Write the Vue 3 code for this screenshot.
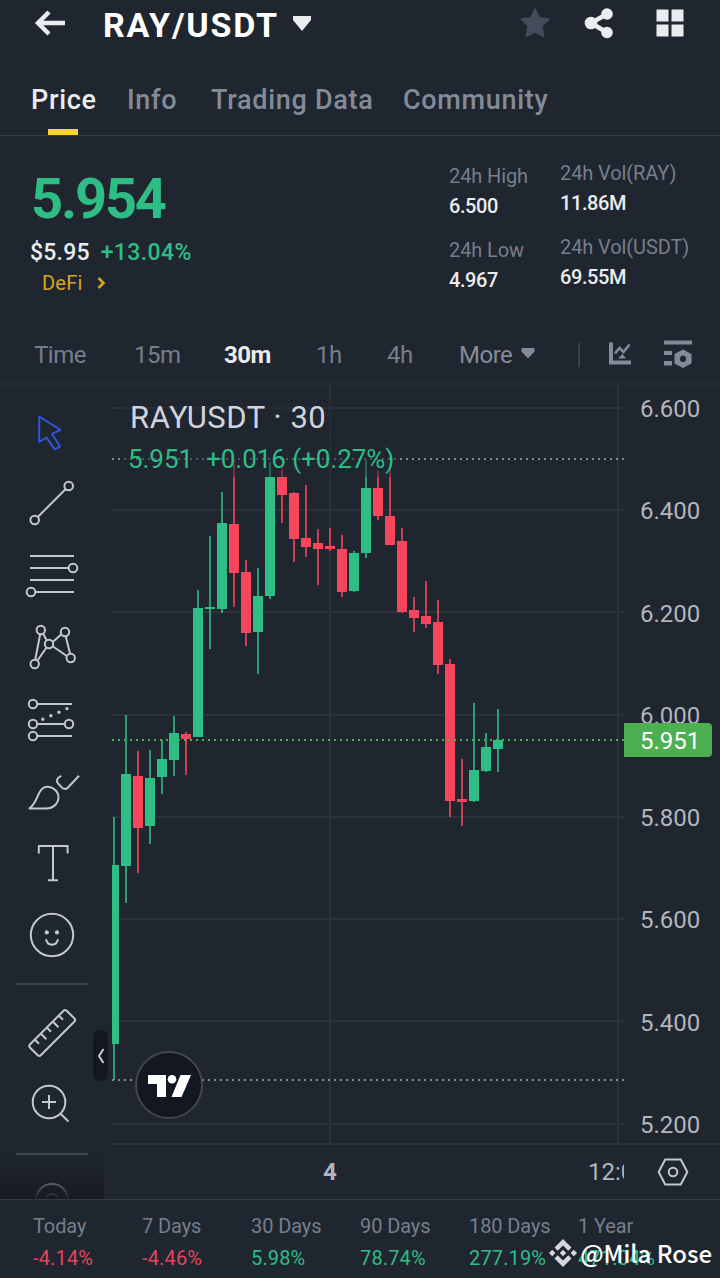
<script setup>
import { ref } from 'vue'

const tabs = ['Price', 'Info', 'Trading Data', 'Community']
const activeTab = ref('Price')

const intervals = ['Time', '15m', '30m', '1h', '4h']
const activeInterval = ref('30m')

const stats = [
  [
    { label: '24h High', value: '6.500' },
    { label: '24h Low', value: '4.967' },
  ],
  [
    { label: '24h Vol(RAY)', value: '11.86M' },
    { label: '24h Vol(USDT)', value: '69.55M' },
  ],
]

const prices = ['6.600', '6.400', '6.200', '6.000', '5.800', '5.600', '5.400', '5.200']
const gridRows = [23, 125, 227, 330, 432, 534, 636, 739]
const gridCols = [217, 505]

const CANDLE_STEP = 12

// [up, high, low, body top, body bottom] in plot pixels
const candles = [
  [1, 433, 696, 481, 660],
  [1, 331, 519, 390, 482],
  [0, 367, 489, 392, 444],
  [1, 366, 460, 394, 442],
  [1, 356, 410, 375, 393],
  [1, 332, 392, 349, 376],
  [0, 348, 391, 350, 355],
  [1, 206, 353, 224, 353],
  [1, 152, 265, 223, 225],
  [1, 108, 229, 139, 225],
  [0, 75, 223, 140, 189],
  [0, 176, 262, 188, 249],
  [1, 184, 290, 212, 248],
  [1, 78, 215, 93, 212],
  [0, 84, 139, 93, 111],
  [0, 108, 178, 109, 155],
  [0, 101, 173, 154, 163],
  [0, 145, 201, 159, 165],
  [0, 144, 167, 162, 165],
  [0, 151, 213, 165, 208],
  [1, 167, 208, 169, 207],
  [1, 76, 174, 104, 169],
  [0, 87, 136, 104, 132],
  [0, 85, 161, 132, 161],
  [0, 144, 229, 157, 228],
  [0, 213, 248, 226, 234],
  [0, 197, 244, 232, 240],
  [0, 216, 290, 238, 281],
  [0, 275, 433, 280, 417],
  [0, 375, 442, 415, 418],
  [1, 319, 418, 386, 417],
  [1, 349, 388, 363, 387],
  [1, 325, 388, 356, 365],
]

const performance = [
  { label: 'Today', value: '-4.14%' },
  { label: '7 Days', value: '-4.46%' },
  { label: '30 Days', value: '5.98%' },
  { label: '90 Days', value: '78.74%' },
  { label: '180 Days', value: '277.19%' },
  { label: '1 Year', value: '471.04%' },
]
</script>

<template>
  <div class="page">
    <header class="header">
      <svg width="32" height="28" viewBox="0 0 32 28">
        <path d="M15 3 L4 14 L15 25 M4 14 H31" fill="none" stroke="#eaecef" stroke-width="4.4" />
      </svg>
      <h1 class="pair">RAY/USDT</h1>
      <svg width="18" height="15" viewBox="0 0 18 15">
        <path d="M0 0 H18 V4 L9 15 L0 4 Z" fill="#eaecef" />
      </svg>
      <div class="actions">
        <svg width="32" height="32" viewBox="0 0 32 32">
          <path d="M16 2.5 L20 11 L29.5 12.2 L22.6 18.8 L24.5 29 L16 24.6 L7.5 29 L9.4 18.8 L2.5 12.2 L12 11 Z"
            fill="#434c5a" stroke="#434c5a" stroke-width="2" stroke-linejoin="round" />
        </svg>
        <svg class="share" width="30" height="32" viewBox="0 0 30 32">
          <path d="M23 7 L7 16 L23 25.5" fill="none" stroke="#eaecef" stroke-width="4.6" />
          <circle cx="23" cy="7" r="5.8" fill="#eaecef" />
          <circle cx="7" cy="16" r="6.3" fill="#eaecef" />
          <circle cx="23" cy="25.5" r="5.8" fill="#eaecef" />
        </svg>
        <svg class="apps" width="28" height="28" viewBox="0 0 28 28">
          <path d="M0.5 0.6 h12 v12 h-12 z M15.5 0.6 h12 v12 h-12 z M0.5 15.6 h12 v12 h-12 z M15.5 15.6 h12 v12 h-12 z"
            fill="#eaecef" />
        </svg>
      </div>
    </header>

    <nav class="tabs">
      <span v-for="tab in tabs" :key="tab" class="tab" :class="{ active: tab === activeTab }" @click="activeTab = tab">
        {{ tab }}
      </span>
    </nav>

    <section class="summary">
      <div class="quote">
        <div class="last">5.954</div>
        <div class="change"><b>$5.95</b><span>+13.04%</span></div>
        <div class="sector">
          DeFi
          <svg width="9" height="12" viewBox="0 0 9 12">
            <path d="M1.5 1 L6.5 6 L1.5 11" fill="none" stroke="#d9a520" stroke-width="2.6" />
          </svg>
        </div>
      </div>
      <div v-for="(column, i) in stats" :key="i" class="stats">
        <dl v-for="stat in column" :key="stat.label" class="stat">
          <dt>{{ stat.label }}</dt>
          <dd>{{ stat.value }}</dd>
        </dl>
      </div>
    </section>

    <div class="intervals">
      <span v-for="item in intervals" :key="item" class="interval" :class="{ active: item === activeInterval }"
        @click="activeInterval = item">{{ item }}</span>
      <span class="interval more">
        More
        <svg width="14" height="14" viewBox="0 0 14 14">
          <path d="M0.5 0 H13.5 V3.5 L7 10.5 L0.5 3.5 Z" fill="#848b98" />
        </svg>
      </span>
      <span class="separator"></span>
      <svg width="24" height="26" viewBox="0 0 24 26">
        <path d="M3 0.5 V20.5 H23" fill="none" stroke="#848b98" stroke-width="4" />
        <path d="M7 11.5 L11.5 6 L15.5 10 L21.5 2.5" fill="none" stroke="#848b98" stroke-width="2.6" />
        <path d="M10 16.5 L14.5 12 L18 16.5 Z" fill="#848b98" />
      </svg>
      <svg width="30" height="30" viewBox="0 0 30 30">
        <path d="M1 0.5 h28 v4 h-28 z M1 11 h8 v4 h-8 z M1 21 h8 v4.5 h-8 z" fill="#848b98" />
        <path fill-rule="evenodd"
          d="M20 9.5 L28.5 14 V23.5 L20 28 L11.5 23.5 V14 Z M20 15.6 a3.2 3.2 0 1 0 0.01 0 Z" fill="#848b98" />
      </svg>
    </div>

    <section class="chart">
      <aside class="tools">
        <svg class="tool cursor" viewBox="0 0 104 72">
          <path d="M39.2 21.5 L60.5 34.8 L52 39 L60 51.5 L54.7 54.3 L46.5 42.7 L39.2 47 Z" />
        </svg>
        <svg class="tool" viewBox="0 0 104 72">
          <circle cx="68.7" cy="19" r="4.3" />
          <circle cx="34.7" cy="53" r="4.3" />
          <path d="M38 49.8 L65.5 22.2" />
        </svg>
        <svg class="tool" viewBox="0 0 104 72">
          <path d="M30 17 H74 M30 29 H68.5 M30 41 H74 M35.5 53 H74" />
          <circle cx="73" cy="29" r="4.3" />
          <circle cx="31" cy="53" r="4.3" />
        </svg>
        <svg class="tool" viewBox="0 0 104 72">
          <path d="M40.2 23 L35.3 48.5 M43 22.5 L46.7 29.3 M53 30.8 L61.2 23.5 M65.8 25.5 L70 42.5 M53 35.5 L66.8 45 M46.5 36.5 L37.5 49.5" />
          <circle cx="40.8" cy="19" r="4.2" />
          <circle cx="65" cy="21" r="4.2" />
          <circle cx="49" cy="33" r="4.2" />
          <circle cx="70.7" cy="47" r="4.2" />
          <circle cx="34.7" cy="53" r="4.2" />
        </svg>
        <svg class="tool" viewBox="0 0 104 72">
          <path d="M37.5 21 H72 M37.5 41 H64.5 M37.5 53 H72" />
          <circle cx="33" cy="21" r="4.2" />
          <circle cx="33" cy="41" r="4.2" />
          <circle cx="69" cy="41" r="4.2" />
          <circle cx="33" cy="53" r="4.2" />
          <path class="dots" d="M42.8 36.3 L67.2 25.5" />
        </svg>
        <svg class="tool" viewBox="0 0 104 72">
          <path d="M29.5 53.4 C36.5 48 36.5 42 40 36.5 C42.5 32.5 46.5 31.5 49.5 32 C55 33 59 38 58.5 43 C58 49 53 53.4 46 53.4 Z" />
          <path d="M61.3 20.8 C56.5 23 55.8 26 58.3 28.8 L62 32.6 C64 34.5 66 34.5 68 32.5 L79 20.8" />
        </svg>
        <svg class="tool" viewBox="0 0 104 72">
          <path d="M38.8 26.5 V19 H67.6 V26.5 M53 19 V53.3 M48 53.3 H58" />
        </svg>
        <svg class="tool" viewBox="0 0 104 72">
          <circle cx="52" cy="36" r="21.2" />
          <circle class="fill" cx="46.8" cy="33.4" r="2.1" />
          <circle class="fill" cx="57" cy="33.4" r="2.1" />
          <path d="M46 40.3 C47.5 47.5 56.5 47.5 58 40.3" />
        </svg>
        <i class="rule"></i>
        <svg class="tool" viewBox="0 0 104 72">
          <g transform="translate(52.2 36) rotate(-45)">
            <rect x="-26" y="-7.7" width="52" height="15.4" rx="2.5" />
            <path d="M-17 -7.7 v6 M-8.5 -7.7 v8 M0 -7.7 v6 M8.5 -7.7 v8 M17 -7.7 v6" />
          </g>
        </svg>
        <svg class="tool" viewBox="0 0 104 72">
          <circle cx="49" cy="33" r="16.3" />
          <path d="M49 26 V40 M42 33 H56 M60.5 44.7 L68.5 52.5" />
        </svg>
        <i class="rule"></i>
        <svg class="tool" viewBox="0 0 104 72">
          <circle cx="52" cy="33" r="16" />
          <circle cx="52" cy="33" r="6" />
        </svg>
        <div class="fade"></div>
        <div class="collapse">
          <svg width="8" height="16" viewBox="0 0 8 16">
            <path d="M6.5 1 L2 8 L6.5 15" fill="none" stroke="#c3c7d0" stroke-width="2" />
          </svg>
        </div>
      </aside>

      <div class="plot">
        <svg width="512" height="760" viewBox="0 0 512 760">
          <g fill="#2b323c">
            <rect v-for="y in gridRows" :key="'r' + y" x="0" :y="y" width="512" height="2" />
            <rect v-for="x in gridCols" :key="'c' + x" :x="x" y="0" width="2" height="760" />
          </g>
          <path d="M0 75 H512 M0 696 H512" stroke="#858a93" stroke-width="2" stroke-dasharray="2 4" />
          <g v-for="([up, high, low, top, bottom], i) in candles" :key="i" :class="up ? 'up' : 'down'">
            <rect class="wick" :x="i * CANDLE_STEP + 1" :y="high" width="2" :height="low - high" />
            <rect :x="i * CANDLE_STEP - 3" :y="top" width="10" :height="bottom - top" />
          </g>
          <path d="M0 356 H512" stroke="#4caf50" stroke-width="2" stroke-dasharray="2 4" />
        </svg>
        <div class="legend">
          <div class="symbol">RAYUSDT · 30</div>
          <div class="delta"><span>5.951</span><span>+0.016 (+0.27%)</span></div>
        </div>
        <div class="brand">
          <svg width="44" height="22" viewBox="0 0 44 22">
            <path d="M1 0 H19 V22 H10 V9 H1 Z M33.5 0 H44 L34.5 22 H24.5 Z" fill="#fff" />
            <circle cx="25" cy="4.3" r="4.3" fill="#fff" />
          </svg>
        </div>
      </div>

      <div class="price-axis">
        <span v-for="price in prices" :key="price">{{ price }}</span>
        <strong class="price-tag">5.951</strong>
      </div>

      <div class="time-axis">
        <b class="day">4</b>
        <span class="hour">12:00</span>
      </div>
      <div class="axis-settings">
        <svg width="32" height="28" viewBox="0 0 32 28">
          <path d="M1.7 14 L8.2 1.5 H23.8 L30.3 14 L23.8 26.5 H8.2 Z" fill="none" stroke="#c3c7d0" stroke-width="2" />
          <circle cx="16" cy="14" r="4.3" fill="none" stroke="#c3c7d0" stroke-width="2" />
        </svg>
      </div>
    </section>

    <footer class="performance">
      <div v-for="item in performance" :key="item.label" class="period">
        <span>{{ item.label }}</span>
        <span :class="item.value.startsWith('-') ? 'loss' : 'gain'">{{ item.value }}</span>
      </div>
      <div class="watermark">
        <svg width="28" height="28" viewBox="0 0 28 28" fill="#d5d7da">
          <path d="M14 0 L22.5 8.5 L19.3 11.7 L14 6.4 L8.7 11.7 L5.5 8.5 Z" />
          <path d="M14 28 L22.5 19.5 L19.3 16.3 L14 21.6 L8.7 16.3 L5.5 19.5 Z" />
          <path d="M14 10.8 L17.2 14 L14 17.2 L10.8 14 Z M3.2 10.8 L6.4 14 L3.2 17.2 L0 14 Z M24.8 10.8 L28 14 L24.8 17.2 L21.6 14 Z" />
        </svg>
        @Mila Rose
      </div>
    </footer>
  </div>
</template>

<style>
body {
  background: #1f2630;
}
</style>

<style scoped>
.page {
  width: 720px;
  height: 1278px;
  overflow: hidden;
  background: #1f2630;
  color: #eaecef;
  font-family: Roboto, "Liberation Sans", sans-serif;
}

svg {
  display: block;
  flex: none;
}

.header {
  display: flex;
  align-items: center;
  height: 46px;
  padding-left: 34px;
}

.pair {
  width: 190px;
  margin: 4px 0 0 37px;
  font-size: 34px;
  font-weight: 700;
  letter-spacing: 1.8px;
  line-height: 40px;
  color: #fff;
}

.actions {
  display: flex;
  align-items: center;
  margin-left: auto;
  padding-right: 36px;
}

.share {
  margin-left: 33px;
}

.apps {
  margin-left: 42px;
}

.tabs {
  display: grid;
  grid-template-columns: 96px 84px 192px auto;
  height: 89px;
  padding-left: 31px;
  border-bottom: 1px solid #333a45;
  font-size: 27px;
  font-weight: 500;
  line-height: 108px;
  letter-spacing: 0.7px;
  color: #848b98;
}

.tab {
  position: relative;
  height: 89px;
  white-space: nowrap;
}

.tab.active {
  color: #eaecef;
}

.tab.active::after {
  content: "";
  position: absolute;
  left: 17px;
  bottom: 0;
  width: 30px;
  height: 6px;
  background: #fcd535;
}

.summary {
  display: grid;
  grid-template-columns: 418px 111px auto;
  height: 189px;
  padding-left: 31px;
}

.quote {
  padding-top: 33px;
}

.last {
  font-size: 56px;
  font-weight: 700;
  line-height: 60px;
  letter-spacing: -2.2px;
  color: #2ebd85;
}

.change {
  display: flex;
  gap: 11px;
  margin-top: 10px;
  font-size: 23px;
  font-weight: 500;
  line-height: 28px;
  color: #2ebd85;
}

.change b {
  margin-left: -1px;
  font-weight: 500;
  letter-spacing: 0.2px;
  color: #eaecef;
}

.change span {
  letter-spacing: 0.4px;
}

.sector {
  display: flex;
  align-items: center;
  gap: 15px;
  margin-top: 4px;
  padding-left: 11px;
  font-size: 20px;
  line-height: 24px;
  letter-spacing: 0.2px;
  color: #d9a520;
}

.stats {
  display: flex;
  flex-direction: column;
  gap: 16px;
  padding-top: 26px;
}

.stats:last-child {
  padding-top: 23px;
}

.stat {
  margin: 0;
  font-size: 20px;
  line-height: 29px;
  white-space: nowrap;
}

.stat dt {
  letter-spacing: -0.1px;
  color: #777e8b;
}

.stat dd {
  margin: 1px 0 -1px;
  font-weight: 500;
  letter-spacing: -0.4px;
}

.intervals {
  display: grid;
  grid-template-columns: 100px 90px 92px 71px 72px 119px 30px 55px auto;
  align-items: center;
  height: 60px;
  box-sizing: border-box;
  padding: 1px 0 0 34px;
  border-bottom: 2px solid #252c37;
  font-size: 24px;
  letter-spacing: -0.5px;
  color: #777e8b;
}

.interval.active {
  font-weight: 700;
  color: #eaecef;
}

.more {
  display: flex;
  align-items: center;
  gap: 9px;
  color: #848b98;
}

.separator {
  width: 2px;
  height: 24px;
  background: #39414c;
}

.chart {
  display: grid;
  grid-template-columns: 112px 512px 96px;
  grid-template-rows: 760px 55px;
  height: 815px;
  margin-top: -1px;
}

.tools {
  position: relative;
  grid-row: 1 / 3;
  box-sizing: border-box;
  height: 815px;
  padding-top: 11px;
  overflow: hidden;
}

.tool {
  width: 104px;
  height: 72px;
  fill: none;
  stroke: #c3c7d0;
  stroke-width: 2;
  stroke-linejoin: round;
}

.cursor {
  stroke: #2f56d8;
}

.tool .fill {
  fill: #c3c7d0;
  stroke: none;
}

.tool .dots {
  stroke-width: 3.4;
  stroke-linecap: round;
  stroke-dasharray: 0 8.8;
}

.rule {
  display: block;
  width: 72px;
  height: 2px;
  margin: 12px 16px;
  background: #40444f;
}

.fade {
  position: absolute;
  left: 0;
  bottom: 0;
  width: 104px;
  height: 44px;
  background: linear-gradient(rgba(22, 25, 35, 0), rgba(22, 25, 35, 0.95));
}

.collapse {
  position: absolute;
  left: 93px;
  top: 646px;
  display: flex;
  align-items: center;
  justify-content: center;
  width: 15px;
  height: 51px;
  border-radius: 7px;
  background: #131722;
}

.plot {
  position: relative;
  overflow: hidden;
}

.up {
  fill: #2ebd85;
}

.down {
  fill: #f6465d;
}

.wick {
  opacity: 0.8;
}

.legend {
  position: absolute;
  left: 12px;
  top: 15px;
}

.symbol,
.delta {
  width: max-content;
  background: rgba(31, 38, 48, 0.5);
}

.symbol {
  padding: 0 5px 0 6px;
  font-size: 31px;
  line-height: 38px;
  letter-spacing: 0.55px;
  color: #d1d4dc;
}

.delta {
  display: flex;
  gap: 13px;
  margin-top: 4px;
  padding: 0 5px 0 4px;
  font-size: 26px;
  line-height: 36px;
  letter-spacing: -0.05px;
  color: #2ebd85;
}

.brand {
  position: absolute;
  left: 23px;
  bottom: 25px;
  display: flex;
  align-items: center;
  justify-content: center;
  box-sizing: border-box;
  width: 68px;
  height: 68px;
  padding-top: 2px;
  border: 2px solid #42464f;
  border-radius: 50%;
  background: #131722;
}

.price-axis {
  position: relative;
  display: flex;
  flex-direction: column;
  gap: 74.3px;
  padding: 11px 0 0 16px;
  font-size: 24px;
  line-height: 28px;
  color: #b2b5be;
}

.price-tag {
  position: absolute;
  left: 0;
  top: 339px;
  width: 72px;
  height: 34px;
  padding-left: 16px;
  border-radius: 0 4px 4px 0;
  background: #4caf50;
  font-weight: 400;
  line-height: 36px;
  color: #fff;
}

.time-axis {
  display: flex;
  align-items: center;
  justify-content: space-between;
  overflow: hidden;
  font-size: 24px;
  color: #b2b5be;
}

.day {
  margin-left: 211px;
  font-weight: 700;
}

.hour {
  width: 36px;
}

.time-axis,
.axis-settings {
  box-sizing: border-box;
  margin-top: -1px;
  border-top: 2px solid #2a313b;
}

.axis-settings {
  display: flex;
  align-items: center;
  padding-left: 33px;
}

.performance {
  position: relative;
  display: grid;
  grid-template-columns: repeat(6, 109px);
  height: 78px;
  padding-left: 33px;
  border-top: 1px solid #333a45;
}

.period {
  display: flex;
  flex-direction: column;
  padding-top: 10px;
  font-size: 20px;
  line-height: 32px;
  letter-spacing: -0.1px;
  white-space: nowrap;
  color: #777e8b;
}

.gain,
.loss {
  letter-spacing: 0.15px;
}

.gain {
  color: #2ebd85;
}

.loss {
  color: #e5455b;
}

.watermark {
  position: absolute;
  right: 8px;
  top: 36px;
  display: flex;
  align-items: center;
  gap: 3px;
  font-family: "Noto Sans CJK SC", sans-serif;
  font-size: 24px;
  font-weight: 500;
  line-height: 34px;
  color: #fff;
}
</style>
